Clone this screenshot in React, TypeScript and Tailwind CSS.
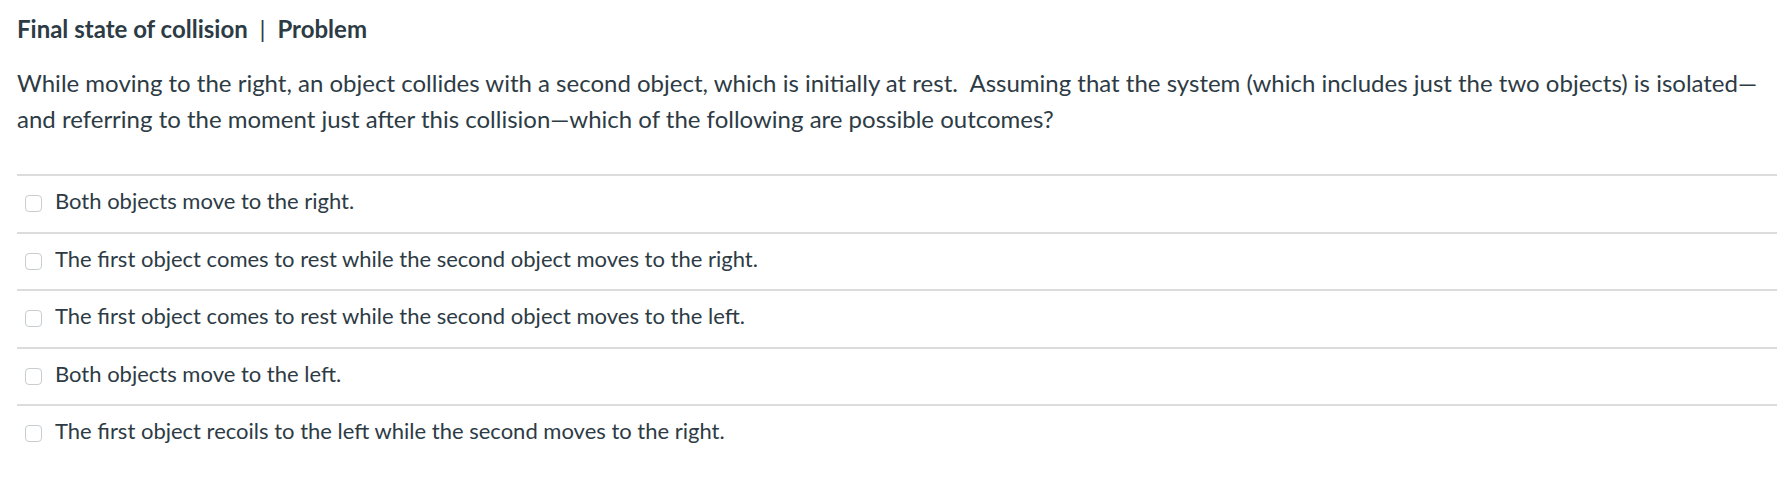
import React from "react";

const options = [
  "Both objects move to the right.",
  "The first object comes to rest while the second object moves to the right.",
  "The first object comes to rest while the second object moves to the left.",
  "Both objects move to the left.",
  "The first object recoils to the left while the second moves to the right.",
];

export default function App() {
  return (
    <div
      className="w-[1792px] h-[484px] bg-white text-[#2d3b45] pl-[17px] pr-[15px] pt-[14px]"
      style={{ fontFamily: "Lato, 'Noto Sans', sans-serif" }}
    >
      <h1 className="text-[24px] font-bold leading-[30px]">
        Final state of collision <span className="font-normal mx-[6px]">|</span> Problem
      </h1>
      <p className="mt-[21px] text-[24px] leading-[35.5px]">
        While moving to the right, an object collides with a second object, which is initially at rest.&nbsp; Assuming that the system (which includes just the two objects) is isolated—and referring to the moment just after this collision—which of the following are possible outcomes?
      </p>
      <ul className="mt-[38px]">
        {options.map((o) => (
          <li key={o} className="flex items-center h-[57.5px] border-t-2 border-[#dcdcdc]">
            <span className="ml-[8px] w-[17px] h-[17px] rounded-[4px] border border-[#c7cdd1] bg-white shrink-0" />
            <span className="ml-[13px] mb-[5px] text-[22px] leading-[28px]">{o}</span>
          </li>
        ))}
      </ul>
    </div>
  );
}
